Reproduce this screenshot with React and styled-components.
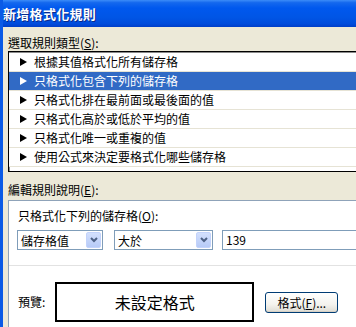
import React from "react";
import styled, { createGlobalStyle } from "styled-components";

const GlobalStyle = createGlobalStyle`
  html, body {
    margin: 0;
    padding: 0;
    background: #ece9d8;
  }
  body {
    font-family: "Noto Sans CJK TC", "Liberation Sans", sans-serif;
    font-size: 12px;
    color: #000;
  }
`;

const Window = styled.div`
  width: 356px;
  height: 327px;
  overflow: hidden;
  display: flex;
  flex-direction: column;
  border-left: 3px solid #0a5ae6;
  box-sizing: border-box;
  background: #ece9d8;
`;

const TitleBar = styled.div`
  height: 27px;
  flex: none;
  display: flex;
  align-items: center;
  padding-left: 3px;
  margin-left: -3px;
  background: linear-gradient(
    #3c8cf8 0%,
    #1468ee 10%,
    #0058ee 30%,
    #0055e5 65%,
    #004cdc 88%,
    #003ec8 100%
  );
  color: #fff;
  font-weight: bold;
  font-size: 13px;
  letter-spacing: 0.3px;
  text-shadow: 1px 1px 0 #0a2a8a;
  white-space: nowrap;
`;

const Body = styled.div`
  flex: 1;
  padding: 8px 0 0 5px;
  display: flex;
  flex-direction: column;
  min-width: 0;
`;

const Label = styled.div`
  line-height: 16px;
  white-space: nowrap;
  margin-left: ${({ $indent }) => $indent || 0}px;
`;

const RuleList = styled.ul`
  list-style: none;
  margin: 0;
  padding: 1px 0 4px;
  width: 400px;
  background: #fff;
  border: 1px solid #000;
  box-shadow: inset 1px 1px 0 #8a8a8a;
`;

const RuleItem = styled.li`
  height: 18px;
  display: flex;
  align-items: center;
  gap: 7px;
  padding-left: 11px;
  border-bottom: 1px solid #e6e3d5;
  background: ${({ $selected }) => ($selected ? "#316ac5" : "#fff")};
  color: ${({ $selected }) => ($selected ? "#fff" : "#000")};
  white-space: nowrap;
  line-height: 18px;
`;

const Arrow = ({ color }) => (
  <svg width="7" height="8" viewBox="0 0 7 8">
    <polygon points="0,0 7,4 0,8" fill={color} />
  </svg>
);

const EditPanel = styled.div`
  margin-top: 2px;
  width: 400px;
  flex: 1;
  background: #fff;
  border: 1px solid #8fa3b9;
  border-bottom: none;
  padding: 7px 0 0 8px;
`;

const ControlRow = styled.div`
  display: flex;
  margin-top: 6px;
`;

const Select = styled.div`
  width: ${({ $w }) => $w}px;
  height: 20px;
  box-sizing: border-box;
  border: 1px solid #7f9db9;
  display: flex;
  align-items: center;
  justify-content: space-between;
  padding: 0 1px 0 3px;
  margin-right: ${({ $gap }) => $gap}px;
  white-space: nowrap;
`;

const DropButton = styled.div`
  width: 15px;
  height: 16px;
  border-radius: 2px;
  background: linear-gradient(#d3e0fd, #b7cbf7);
  border: 1px solid #c3d3fb;
  box-sizing: border-box;
  display: flex;
  align-items: center;
  justify-content: center;
`;

const Chevron = () => (
  <svg width="8" height="6" viewBox="0 0 8 6">
    <polyline
      points="1,1 4,4 7,1"
      fill="none"
      stroke="#4d6185"
      strokeWidth="2"
    />
  </svg>
);

const TextInput = styled.div`
  flex: 1;
  height: 20px;
  box-sizing: border-box;
  border: 1px solid #7f9db9;
  padding-left: 3px;
  line-height: 18px;
`;

const Divider = styled.div`
  height: 1px;
  background: #e2e2e2;
  margin: 15px 0 0 -8px;
`;

const PreviewRow = styled.div`
  display: flex;
  align-items: center;
  margin-top: 16px;
`;

const PreviewBox = styled.div`
  width: 199px;
  height: 40px;
  box-sizing: border-box;
  border: 2px solid #000;
  display: flex;
  align-items: center;
  justify-content: center;
  font-size: 16px;
  margin: 0 11px 0 10px;
`;

const Button = styled.div`
  width: 73px;
  height: 21px;
  box-sizing: border-box;
  border: 1px solid #003c74;
  border-radius: 3px;
  background: linear-gradient(#fff 0%, #f4f3ee 60%, #dedcd3 100%);
  box-shadow: inset 0 -1px 0 #d6d0c5;
  display: flex;
  align-items: center;
  justify-content: center;
  white-space: nowrap;
`;

const rules = [
  "根據其值格式化所有儲存格",
  "只格式化包含下列的儲存格",
  "只格式化排在最前面或最後面的值",
  "只格式化高於或低於平均的值",
  "只格式化唯一或重複的值",
  "使用公式來決定要格式化哪些儲存格",
];

export default function App() {
  return (
    <>
      <GlobalStyle />
      <Window>
        <TitleBar>新增格式化規則</TitleBar>
        <Body>
          <Label>
            選取規則類型(<u>S</u>):
          </Label>
          <RuleList>
            {rules.map((r, i) => (
              <RuleItem key={r} $selected={i === 1}>
                <Arrow color={i === 1 ? "#fff" : "#000"} />
                {r}
              </RuleItem>
            ))}
          </RuleList>
          <Label style={{ marginTop: 10 }}>
            編輯規則說明(<u>E</u>):
          </Label>
          <EditPanel>
            <Label $indent={1}>
              只格式化下列的儲存格(<u>O</u>):
            </Label>
            <ControlRow>
              <Select $w={86} $gap={11}>
                儲存格值
                <DropButton>
                  <Chevron />
                </DropButton>
              </Select>
              <Select $w={99} $gap={9}>
                大於
                <DropButton>
                  <Chevron />
                </DropButton>
              </Select>
              <TextInput>139</TextInput>
            </ControlRow>
            <Divider />
            <PreviewRow>
              <Label $indent={1}>預覽:</Label>
              <PreviewBox>未設定格式</PreviewBox>
              <Button>
                格式(<u>F</u>)...
              </Button>
            </PreviewRow>
          </EditPanel>
        </Body>
      </Window>
    </>
  );
}
